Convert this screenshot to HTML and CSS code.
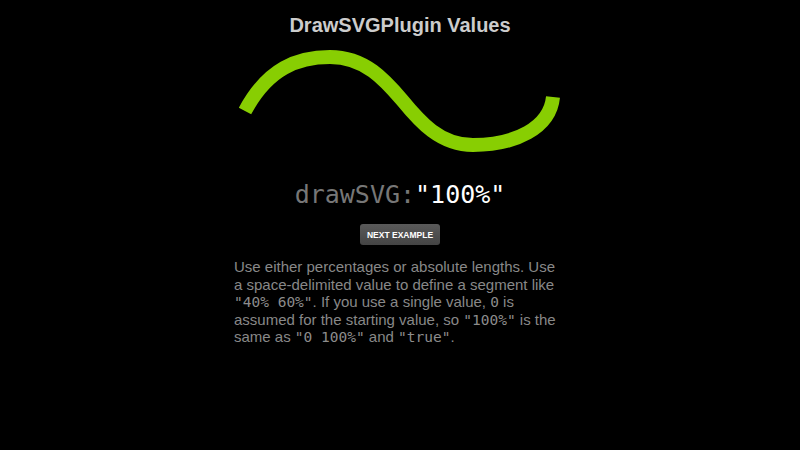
FILE: index.html
```html
<!DOCTYPE html>
<html lang="en">
<head>
  <meta charset="UTF-8" />
  <title>DrawSVGPlugin Values</title>
  <link rel="stylesheet" href="styles.css">
</head>
<body>
  <div class="demo">
    <h1>DrawSVGPlugin Values</h1>
    <svg class="wave" width="340" height="120" viewBox="230 40 340 120">
      <path d="M245,111 C268,68 298,57 330,57 C365,57 385,80 402,100 C420,122 440,145 473,145 C515,145 550,128 553,97" />
    </svg>
    <div class="value"><span class="prop">drawSVG:</span><span class="val">"100%"</span></div>
    <button class="next-btn">NEXT EXAMPLE</button>
    <p class="desc">Use either percentages or absolute lengths. Use a space-delimited value to define a segment like <code>"40% 60%"</code>. If you use a single value, <code>0</code> is assumed for the starting value, so <code>"100%"</code> is the same as <code>"0 100%"</code> and <code>"true"</code>.</p>
  </div>
</body>
</html>
```

FILE: styles.css
```css
html, body {
  margin: 0;
  padding: 0;
  height: 100%;
  background: #000;
  font-family: "Liberation Sans", Arial, sans-serif;
}
.demo {
  display: flex;
  flex-direction: column;
  align-items: center;
}
h1 {
  margin: 13px 0 0;
  font-size: 20px;
  line-height: 24px;
  color: #ccc;
}
.wave {
  display: block;
  margin-top: 3px;
}
.wave path {
  fill: none;
  stroke: #88ce02;
  stroke-width: 14;
}
.value {
  margin-top: 20px;
  font-family: "DejaVu Sans Mono", monospace;
  font-size: 25px;
  line-height: 30px;
}
.value .prop { color: #777; }
.value .val { color: #fff; }
.next-btn {
  margin-top: 14px;
  width: 80px;
  height: 21px;
  padding: 0;
  border: none;
  border-radius: 3px;
  background: linear-gradient(#5a5a5a, #444);
  color: #fff;
  font-family: "Liberation Sans", Arial, sans-serif;
  font-size: 8.5px;
  font-weight: bold;
}
.desc {
  width: 328px;
  margin: 13px 0 0;
  padding-right: 4px;
  color: #888;
  font-size: 15px;
  line-height: 17.5px;
}
.desc code {
  font-family: "DejaVu Sans Mono", monospace;
  font-size: 14.5px;
  line-height: 1;
  color: #8c8c8c;
}
```
